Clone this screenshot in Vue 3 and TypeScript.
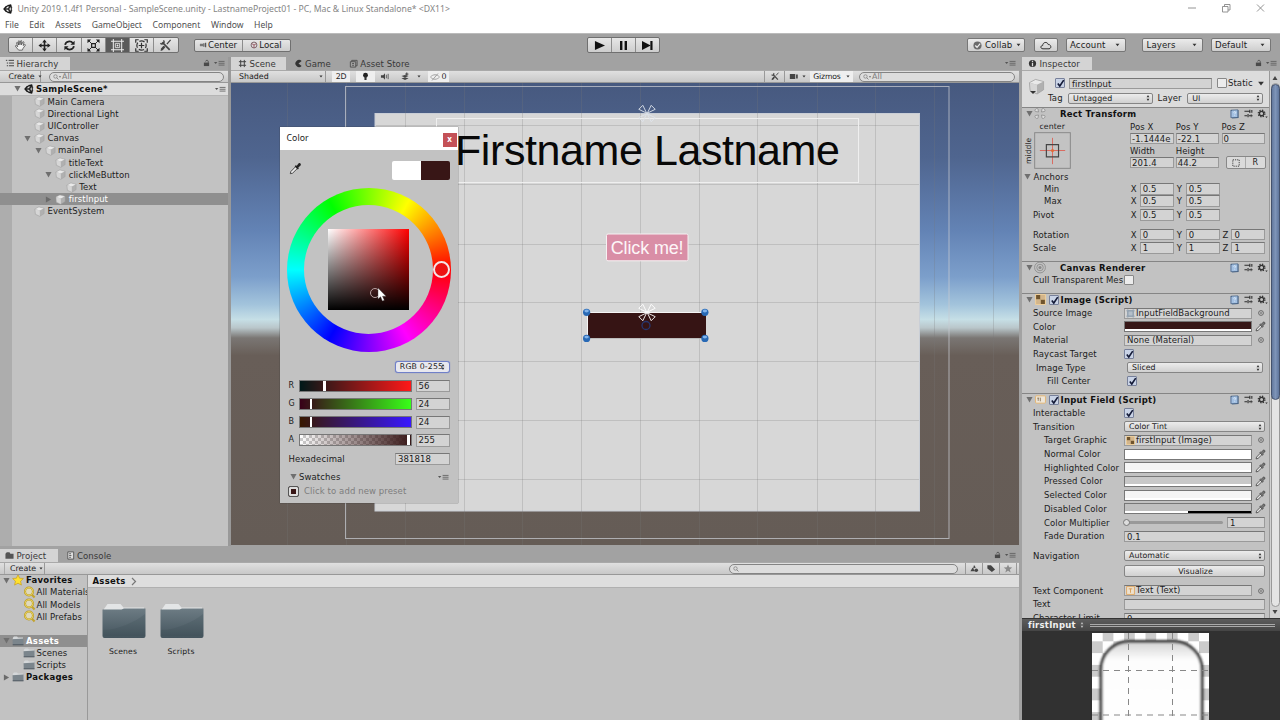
<script setup lang="ts">
interface TreeNode { label: string; depth: number; arrow?: 'open' | 'closed'; selected?: boolean }
interface Field { kind: string; label: string; indent?: number; value?: string; icon?: string; gap?: number; color?: string; alpha?: string; checked?: boolean }

const menus = ['File', 'Edit', 'Assets', 'GameObject', 'Component', 'Window', 'Help']
const tools = ['hand', 'move', 'rotate', 'scale', 'rect', 'multi', 'wrench']
const hierarchy: TreeNode[] = [
  { label: 'Main Camera', depth: 0 },
  { label: 'Directional Light', depth: 0 },
  { label: 'UIController', depth: 0 },
  { label: 'Canvas', depth: 0, arrow: 'open' },
  { label: 'mainPanel', depth: 1, arrow: 'open' },
  { label: 'titleText', depth: 2 },
  { label: 'clickMeButton', depth: 2, arrow: 'open' },
  { label: 'Text', depth: 3 },
  { label: 'firstInput', depth: 2, arrow: 'closed', selected: true },
  { label: 'EventSystem', depth: 0 },
]
const vectors = [
  { label: 'Min', cls: 'min', axes: [['X', '0.5'], ['Y', '0.5']] },
  { label: 'Max', cls: 'max', axes: [['X', '0.5'], ['Y', '0.5']] },
  { label: 'Pivot', cls: 'pivot', axes: [['X', '0.5'], ['Y', '0.5']] },
  { label: 'Rotation', cls: 'rotation', axes: [['X', '0'], ['Y', '0'], ['Z', '0']] },
  { label: 'Scale', cls: 'scale', axes: [['X', '1'], ['Y', '1'], ['Z', '1']] },
]
const imageFields: Field[] = [
  { kind: 'object', label: 'Source Image', value: 'InputFieldBackground', icon: 'sprite' },
  { kind: 'color', label: 'Color', color: '#381818', alpha: '#ffffff' },
  { kind: 'object', label: 'Material', value: 'None (Material)' },
  { kind: 'check', label: 'Raycast Target' },
  { kind: 'select', label: 'Image Type', value: 'Sliced', indent: 3 },
  { kind: 'check', label: 'Fill Center', indent: 14 },
]
const inputFields: Field[] = [
  { kind: 'check', label: 'Interactable' },
  { kind: 'select', label: 'Transition', value: 'Color Tint' },
  { kind: 'object', label: 'Target Graphic', value: 'firstInput (Image)', icon: 'image', indent: 11 },
  { kind: 'color', label: 'Normal Color', indent: 11, color: '#ffffff', alpha: '#ffffff' },
  { kind: 'color', label: 'Highlighted Color', indent: 11, color: '#f5f5f5', alpha: '#ffffff' },
  { kind: 'color', label: 'Pressed Color', indent: 11, color: '#c8c8c8', alpha: '#ffffff' },
  { kind: 'color', label: 'Selected Color', indent: 11, color: '#f5f5f5', alpha: '#ffffff' },
  { kind: 'color', label: 'Disabled Color', indent: 11, color: '#c0c0c0', alpha: 'linear-gradient(90deg,#fff 50%,#000 50%)' },
  { kind: 'slider', label: 'Color Multiplier', indent: 11, value: '1' },
  { kind: 'text', label: 'Fade Duration', indent: 11, value: '0.1' },
  { kind: 'select', label: 'Navigation', value: 'Automatic', gap: 5.8 },
  { kind: 'button', label: '', value: 'Visualize', gap: 2 },
  { kind: 'object', label: 'Text Component', value: 'Text (Text)', icon: 'text', gap: 5.6 },
  { kind: 'text', label: 'Text', value: '' },
  { kind: 'text', label: 'Character Limit', value: '0' },
]
const channels = [
  { name: 'R', value: '56', pos: 22, bg: 'linear-gradient(90deg,#001818,#ff1818)' },
  { name: 'G', value: '24', pos: 9.8, bg: 'linear-gradient(90deg,#380018,#381818 10%,#38ff18)' },
  { name: 'B', value: '24', pos: 9.8, bg: 'linear-gradient(90deg,#381800,#381818 10%,#3818ff)' },
  { name: 'A', value: '255', pos: 98, bg: 'linear-gradient(90deg,#38181800,#381818),repeating-conic-gradient(#ccc 0 25%,#fff 0 50%) 0 0/6px 6px' },
]
const gridX = [287.5, 346.5, 405.5, 464.5, 522.5, 581.5, 640.5, 699.5, 757.5, 817.5, 875.5, 934.5, 993.5]
const gridY = [125.5, 184.5, 244.5, 302.5, 361.5, 420.5, 479.5]
const handles = [[586.6, 312.3], [704.9, 312.3], [586.6, 338.4], [704.9, 338.4]]
const previewTiles: { x: number; y: number }[] = []
for (let r = 0; r < 9; r++) for (let c = 0; c < 11; c++) if ((r + c) % 2 === 1) previewTiles.push({ x: c * 10.7, y: r * 11.8 - 3.5 })
</script>

<template>
  <div class="editor">
    <svg class="defs" width="0" height="0">
      <defs>
        <symbol id="unity" viewBox="0 0 12 12"><path d="M9.900 4.800 9 1.400 5.500 2.300 5 3.100H3.900L1.400 6l2.500 2.900H5l.5.8 3.500.9.9-3.400-.5-1.200zM5.300 3.500 7.500 3 6.100 5.400H3.300zM3.300 6.600h2.800L7.500 9l-2.200-.5zM8.500 8.400 7.100 6 8.500 3.600 9.100 6z" fill="#161616" stroke="#161616" stroke-width=".4" fill-rule="evenodd" /></symbol>
        <symbol id="cube" viewBox="0 0 12 12"><path d="M1 3.300 5.300 1 11 2.500v5.800L6.400 11.300 1.500 9z" fill="#b0b0b0" /><path d="M1 3.300 5.300 1 11 2.500 6.300 4.800z" fill="#e9e9e9" /><path d="M1 3.300l5.300 1.500.1 6.500L1.500 9z" fill="#d6d6d6" /><path d="M1 3.300 5.300 1 11 2.500v5.800L6.400 11.300 1.500 9z" fill="none" stroke="#9d9d9d" stroke-width=".5" /></symbol>
        <symbol id="down" viewBox="0 0 8 8"><path d="M.5 1h7L4 7.300z" fill="#6f6f6f" /></symbol>
        <symbol id="right" viewBox="0 0 8 8"><path d="M1 .5v7l6-3.500z" fill="#6a6a6a" /></symbol>
        <symbol id="caret" viewBox="0 0 6 4"><path d="M.7.5h4.600L3 3.500z" fill="#333" /></symbol>
        <symbol id="menu" viewBox="0 0 12 7"><path d="M0 2.200h3.600L1.800 4.400z" fill="#555" /><path d="M5 1.500h6.500M5 3.500h6.500M5 5.500h6.500" stroke="#5c5c5c" stroke-width=".9" /></symbol>
        <symbol id="lock" viewBox="0 0 8 8"><path d="M1 3.500h6v4H1z" fill="#4a4a4a" /><path d="M3 2.300C3 .5 6 .3 6 2.500v1.200" fill="none" stroke="#4a4a4a" /></symbol>
        <symbol id="search" viewBox="0 0 8 8"><circle cx="3.300" cy="3.300" r="2.300" fill="none" stroke="#777" stroke-width=".9" /><path d="m5 5 2.300 2.300" stroke="#777" stroke-width="1.100" /></symbol>
        <symbol id="updown" viewBox="0 0 4 8"><path d="M.6 3.300 2 1l1.400 2.300zM.6 4.700 2 7l1.400-2.300z" fill="#333" /></symbol>
        <symbol id="pick" viewBox="0 0 12 12"><path d="m1.200 10.800.5-2L6 4.400 7.700 6l-4.400 4.300z" fill="#eee" stroke="#333" stroke-width=".8" /><path d="m5.200 4 1-1 .9.500L8.800 1.300c1-1 2.900.6 1.900 1.900L8.600 5l.5 1-1 .9z" fill="#222" /></symbol>
        <symbol id="pickgray" viewBox="0 0 12 12"><path d="m1.200 10.800.5-2L6 4.400 7.700 6l-4.400 4.300z" fill="#e4e4e4" stroke="#444" stroke-width=".9" /><path d="m5.200 4 1-1 .9.500L8.800 1.300c1-1 2.900.6 1.900 1.900L8.600 5l.5 1-1 .9z" fill="#777" stroke="#333" stroke-width=".6" /></symbol>
        <symbol id="target" viewBox="0 0 8 8"><circle cx="4" cy="4" r="2.400" fill="none" stroke="#555" stroke-width=".8" /><circle cx="4" cy="4" r=".8" fill="#555" /></symbol>
        <symbol id="book" viewBox="0 0 11 11"><path d="M1 1.500 2 .8 9.200.6l.9 1V10l-7 .4-2.100-1z" fill="#4c6687" /><path d="M1.200 1.800 2.500 2.200V9.400l-1.300-.6z" fill="#8fa9c9" /><path d="M2.700 1.600 8.700 1.300v7.500l-6 .4z" fill="#a3c0e2" /><path d="M4.600 4c0-1.500 2.400-1.300 2.200 0-.1.800-1.100.8-1.100 1.600m0 .8v.9" fill="none" stroke="#e8f1fb" stroke-width=".9" /></symbol>
        <symbol id="presets" viewBox="0 0 10 10"><path d="M.5 2.500H6M.5 7.500h3M5.500 7.500h4M6.500.8v3.600M4.500 5.600v3.700M8.700 1v3.200" stroke="#2d2d2d" stroke-width="1.200" /><path d="M8 5.600v3.600" stroke="#2d2d2d" stroke-width=".6" /></symbol>
        <symbol id="gear" viewBox="0 0 12 11"><circle cx="5" cy="5" r="2.400" fill="none" stroke="#333" stroke-width="1.500" /><circle cx="5" cy="5" r="3.700" fill="none" stroke="#333" stroke-width="1.300" stroke-dasharray="1.500 1.400" /><path d="M9 8.300h2.800L10.400 10z" fill="#333" /></symbol>
        <symbol id="check" viewBox="0 0 10 10"><path d="m2 5 2.200 2.800L8.600 1.200" fill="none" stroke="#151b38" stroke-width="1.800" /></symbol>
        <symbol id="sprite" viewBox="0 0 10 10"><rect x="2" y="2" width="6" height="6" fill="#b4bfca" stroke="#8495a5" /><path d="M0 2h10M0 8h10M2 0v10M8 0v10" stroke="#91a0af" stroke-width=".7" /></symbol>
        <symbol id="image" viewBox="0 0 10 10"><rect width="10" height="10" rx="1" fill="#eccd9a" /><path d="M1 1h4v4H1zM5 5h4v4H5z" fill="#6f542e" /><path d="M5 1h4v4H5zM1 5h4v4H1z" fill="#d3b58b" /></symbol>
        <symbol id="text" viewBox="0 0 10 10"><rect x=".7" y=".7" width="8.600" height="8.600" fill="#eee2cf" stroke="#e1a75f" /><path d="M3 3.200h4M5 3v4.500" stroke="#d99b50" /></symbol>
        <symbol id="field" viewBox="0 0 12 10"><rect x=".6" y="1" width="10.800" height="8" rx="1" fill="#eee6d9" stroke="#e5b46d" /><path d="M2.500 3.500h2M3.500 3.500v3M5.800 3v4" stroke="#765f3e" stroke-width=".8" /></symbol>
        <symbol id="rays" viewBox="0 0 12 12"><circle cx="6" cy="6" r="5" fill="none" stroke="#8b8b8b" stroke-width=".8" /><circle cx="6" cy="6" r="3" fill="none" stroke="#8b8b8b" stroke-width=".8" /><circle cx="6" cy="6" r="1.400" fill="#888" /></symbol>
        <symbol id="anchors" viewBox="0 0 18 18"><path d="M8.700 8.700.8 4.800 4.800.8zM9.300 8.700 13.200.8l4 4zM8.700 9.300.8 13.200l4 4zM9.300 9.300l7.900 3.900-4 4z" fill="none" stroke="currentColor" stroke-width=".9" /></symbol>
        <symbol id="petals" viewBox="0 0 14 14"><path d="M5.400 5.400 2 4.800C.5 3.400 3.400.5 4.800 2zM8.600 5.400l.6-3.400c1.400-1.500 4.300 1.400 2.800 2.800zM5.400 8.600 2 9.200c-1.500 1.400 1.400 4.300 2.800 2.800zM8.600 8.600l3.400.6c1.500 1.400-1.400 4.300-2.800 2.800z" fill="#ddd" stroke="#888" stroke-width=".8" /></symbol>
        <symbol id="hand" viewBox="0 0 14 14"><path d="M5 12 1.600 8c-.4-1 .7-1.300 1.500-.5L4 8.300 2.800 4.500c-.2-1 .9-1.200 1.200-.3L5 6.500 4.700 2.600c0-1 1.200-1 1.300 0l.4 3.600.7-4c.2-.9 1.300-.7 1.200.3L8 6.300l1.600-3c.5-.8 1.400-.3 1.100.6L9.900 7l1.500-1c.8-.3 1.200.4.600 1L9.800 10 9 12z" fill="#f2f2f2" stroke="#444" stroke-width=".8" /></symbol>
        <symbol id="move" viewBox="0 0 14 14"><path d="M7 2v10M2 7h10" stroke="#222" stroke-width="1.700" /><path d="M7 .5 9.500 3.800h-5zM7 13.500l2.500-3.300h-5zM.5 7l3.300-2.500v5zM13.500 7l-3.300-2.500v5z" fill="#222" /></symbol>
        <symbol id="rotate" viewBox="0 0 14 14"><path d="M2.300 6.300C3 2.500 8 1.400 10.700 4.500M11.700 7.700C11 11.500 6 12.600 3.300 9.500" fill="none" stroke="#222" stroke-width="1.900" /><path d="M12.500 2v4.300H8zM1.500 12V7.700H6z" fill="#222" /></symbol>
        <symbol id="scale" viewBox="0 0 14 14"><path d="M5 5h4v4H5z" fill="#ddd" stroke="#222" stroke-width="1.300" /><path d="m1 1 4 4M13 1 9 5M1 13l4-4M13 13 9 9" stroke="#222" /><path d="M.5.500h4l-4 4zM13.500.5h-4l4 4zM.5 13.500h4l-4-4zM13.500 13.500h-4l4-4z" fill="#222" /></symbol>
        <symbol id="rect" viewBox="0 0 14 14"><path d="M2.500 0v14M11.500 0v14M0 2.500h14M0 11.500h14" fill="none" stroke="#ededed" stroke-width="1.100" /><path d="M4.700 4.700h4.600v4.600H4.700z" fill="none" stroke="#ddd" /><circle cx="7" cy="7" r="1" fill="#eee" /></symbol>
        <symbol id="multi" viewBox="0 0 14 14"><circle cx="7" cy="7" r="5" fill="none" stroke="#333" stroke-width="1.300" stroke-dasharray="5.850 2" stroke-dashoffset="3" /><path d="M7 4v6M4 7h6M.8 4V.8H4M10 .8h3.200V4M.8 10v3.200H4M10 13.200h3.200V10" fill="none" stroke="#333" stroke-width="1.300" /></symbol>
        <symbol id="wrench" viewBox="0 0 14 14"><path d="m3.500 3.500 8 8.300" stroke="#444" stroke-width="1.900" /><path d="M4.800 1.500A2.300 2.300 0 0 1 1.500 4.700" fill="none" stroke="#444" stroke-width="1.500" /><path d="m12.500 1-4 4.500M5.800 8 2 12.500" stroke="#444" stroke-width="1.400" /><path d="m5.800 8-3 3.600" stroke="#444" stroke-width="2.600" /></symbol>
        <symbol id="folder" viewBox="0 0 12 10"><path d="M1 1.500 2 .5h3l1 1h5v2H.6z" fill="#d4d7d9" /><path d="M.5 3.200 11.500 2.500v6.300H.8z" fill="#7b858c" /><path d="M.7 8.800h10.800" stroke="#4b555d" /></symbol>
        <symbol id="find" viewBox="0 0 13 13"><circle cx="6" cy="5.500" r="4" fill="#dfd9bd" stroke="#b89b29" stroke-width="2.100" /><circle cx="6" cy="5.500" r="4" fill="none" stroke="#e9d25c" stroke-width="1" /><path d="m9 8.800 2.600 2.700" stroke="#c3a431" stroke-width="2.200" /></symbol>
      </defs>
    </svg>

    <header class="titlebar">
      <svg class="logo"><use href="#unity" /></svg>
      <span class="title">Unity 2019.1.4f1 Personal - SampleScene.unity - LastnameProject01 - PC, Mac &amp; Linux Standalone* &lt;DX11&gt;</span>
      <svg class="winbtns" viewBox="0 0 90 16"><path d="M8 8h8M42.500 6.500h5.500v5.500h-5.500zM44.500 6.500v-2H50V10h-2M77 4.500l7 7M84 4.500l-7 7" fill="none" stroke="#888" stroke-width=".9" /></svg>
    </header>
    <nav class="menubar"><span v-for="m in menus" :key="m">{{ m }}</span></nav>

    <div class="toolbar">
      <div class="group tools">
        <span v-for="t in tools" :key="t" :class="{ on: t === 'rect' }"><svg><use :href="'#' + t" /></svg></span>
      </div>
      <div class="group pivots">
        <span><svg viewBox="0 0 9 8"><path d="M1 2.500h3.500v3H1z" fill="#777" /><path d="M7.500 1.500v5M5.500 2v4" stroke="#444" stroke-width="1.200" /></svg>Center</span>
        <span><svg viewBox="0 0 9 8"><circle cx="4.500" cy="4" r="3.300" fill="#ddd" stroke="#745a60" /><path d="M2 2.500 4.500 4 7 2.500M4.500 4v3.500" fill="none" stroke="#95505c" /></svg>Local</span>
      </div>
      <div class="group play">
        <span><svg viewBox="0 0 14 12"><path d="m2 1 11 5-11 5z" fill="#111" /></svg></span>
        <span><svg viewBox="0 0 14 12"><path d="M4.500 1v10M9.500 1v10" stroke="#111" stroke-width="2.600" /></svg></span>
        <span><svg viewBox="0 0 14 12"><path d="m1 1 9.500 5L1 11z" fill="#111" /><path d="M11.300 1v10" stroke="#111" stroke-width="2.400" /></svg></span>
      </div>
      <div class="drop collab"><svg class="tick" viewBox="0 0 10 10"><circle cx="5" cy="5" r="4.500" fill="#6c6c6c" /><path d="m2.500 5 2 2L8 3" fill="none" stroke="#eee" stroke-width="1.400" /></svg>Collab<svg class="caret"><use href="#caret" /></svg></div>
      <div class="drop cloud"><svg viewBox="0 0 12 9"><path d="M3 7.800C.2 7.800.2 4.500 2.700 4.500 2.700 1 7.300.3 8.200 3.500c3-.3 3.700 4.100.8 4.300z" fill="none" stroke="#333" /></svg></div>
      <div class="drop account">Account<svg class="caret"><use href="#caret" /></svg></div>
      <div class="drop layers">Layers<svg class="caret"><use href="#caret" /></svg></div>
      <div class="drop">Default<svg class="caret"><use href="#caret" /></svg></div>
    </div>

    <main class="workspace">
      <div class="left">
        <div class="upper">
          <section class="hierarchy">
            <div class="tabs">
              <span class="tab active htab"><svg class="ico" viewBox="0 0 10 10"><path d="M1 1.500h1.500M4 1.500h6M2 4.500h1.500M4.500 4.500H10M2 7.500h1.500M4.500 7.500H10" stroke="#444" stroke-width="1.100" /></svg>Hierarchy</span>
              <span class="tabtools"><svg class="lock"><use href="#lock" /></svg><svg class="mn"><use href="#menu" /></svg></span>
            </div>
            <div class="strip">
              <span class="create">Create<svg class="caret"><use href="#caret" /></svg></span>
              <span class="search hs"><svg><use href="#search" /></svg><i></i>All</span>
            </div>
            <div class="tree">
              <div class="scenerow"><svg class="arr"><use href="#down" /></svg><svg class="u"><use href="#unity" /></svg><b>SampleScene*</b><svg class="mn"><use href="#menu" /></svg></div>
              <div v-for="n in hierarchy" :key="n.label" class="node" :class="{ sel: n.selected }" :style="{ paddingLeft: 24 + n.depth * 10.6 + 'px' }">
                <svg class="arr"><use v-if="n.arrow" :href="n.arrow === 'open' ? '#down' : '#right'" /></svg>
                <svg class="cube"><use href="#cube" /></svg><span>{{ n.label }}</span>
              </div>
            </div>
          </section>

          <section class="scene">
            <div class="tabs">
              <span class="tab active stab"><svg class="ico" viewBox="0 0 10 10"><path d="M3 1v8M7 1v8M1 3h8M1 7h8" stroke="#444" stroke-width="1.100" /></svg>Scene</span>
              <span class="tab gtab"><svg class="ico" viewBox="0 0 10 10"><path d="M8.500 2.200A4 4 0 1 0 8.500 7.800L5 5z" fill="#333" /></svg>Game</span>
              <span class="tab"><svg class="ico" viewBox="0 0 10 10"><path d="M1.500 3h6v6h-6zM3 3V1.500h6v6H7.500M3.500 5h2M3.500 7h2" fill="none" stroke="#555" stroke-width="1.100" /></svg>Asset Store</span>
              <span class="tabtools"><svg class="mn"><use href="#menu" /></svg></span>
            </div>
            <div class="strip sstrip">
              <span class="shaded">Shaded<svg class="caret"><use href="#caret" /></svg></span>
              <span class="lit two">2D</span>
              <span class="lit bulb"><svg viewBox="0 0 8 10"><circle cx="4" cy="3.500" r="2.800" fill="#222" /><path d="M2.800 5h2.400v4H2.800z" fill="#333" /></svg></span>
              <span class="cell w21"><svg viewBox="0 0 10 10"><path d="M.5 3.500H3L5 1.500v7L3 6.500H.5z" fill="#444" /><path d="M6.500 3v4M8.500 2v6" stroke="#555" /></svg></span>
              <span class="cell w21"><svg viewBox="0 0 10 10"><path d="m1 4.500 4-1.300 4 1.300L5 6zM1 7l4-1 4 1-4 2z" fill="#444" /><path d="M7 .5v3.600M5.200 2.300h3.600" stroke="#333" /></svg></span>
              <span class="cell w8"><svg class="caret"><use href="#caret" /></svg></span>
              <span class="lit eye"><svg viewBox="0 0 10 8"><path d="M.5 4C3 1 7 1 9.500 4 7 7 3 7 .5 4zM2 7.500 8 .5" fill="none" stroke="#999" stroke-width=".9" /></svg>0</span>
              <span class="grow"></span>
              <span class="cell w21 bl"><svg><use href="#wrench" /></svg></span>
              <span class="cell w26 bl"><svg viewBox="0 0 12 10"><path d="M1 2h6.500v6H1zM8.500 2.500h2v5h-2z" fill="#444" /></svg><svg class="caret"><use href="#caret" /></svg></span>
              <span class="lit giz">Gizmos<svg class="caret"><use href="#caret" /></svg></span>
              <span class="search ss"><svg><use href="#search" /></svg><i></i>All</span>
            </div>
            <svg class="viewport" viewBox="231 83 788 462">
              <defs>
                <linearGradient id="sky" x1="0" y1="0" x2="0" y2="1">
                  <stop offset="0" stop-color="#47597f" /><stop offset=".16" stop-color="#4f658f" /><stop offset=".32" stop-color="#6383b5" /><stop offset=".42" stop-color="#7c9fcb" /><stop offset=".48" stop-color="#a3c4dc" /><stop offset=".512" stop-color="#c6dfe6" /><stop offset=".53" stop-color="#b9c6ca" /><stop offset=".552" stop-color="#7a7673" /><stop offset=".59" stop-color="#685e58" /><stop offset="1" stop-color="#655c56" />
                </linearGradient>
              </defs>
              <rect x="231" y="83" width="788" height="462" fill="url(#sky)" />
              <rect x="375" y="113.500" width="544.500" height="397.500" fill="#d7d7d7" stroke="#c9ced6" />
              <g stroke="#777" stroke-opacity=".25"><path v-for="x in gridX" :key="x" :d="`M${x} 83v462`" /><path v-for="y in gridY" :key="y" :d="`M376 ${y}h543`" /></g>
              <rect x="345.500" y="86.500" width="603.500" height="452" fill="none" stroke="#c7cad0" stroke-opacity=".75" />
              <rect x="436.500" y="118.500" width="422" height="64" fill="none" stroke="#efefef" />
              <text x="455" y="165.300" class="big" textLength="385">Firstname Lastname</text>
              <rect x="606.500" y="234" width="81.500" height="26.800" rx="1.500" fill="#d98ea6" stroke="#f7f0f2" />
              <text x="610.700" y="254" class="click" textLength="73">Click me!</text>
              <rect x="588" y="313" width="118" height="25" fill="#361414" />
              <path d="M587.500 338V312.500H705" fill="none" stroke="#f5f5f5" />
              <path d="M589 338.500h116" stroke="#aaa" stroke-opacity=".6" />
              <circle cx="646" cy="325.500" r="4" fill="none" stroke="#26356e" stroke-width="1.300" />
              <use href="#anchors" x="638" y="104.500" width="18" height="18" color="#dfe4ec" />
              <use href="#anchors" x="638" y="303.500" width="18" height="18" color="#fff" />
              <g v-for="(p, i) in handles" :key="i"><circle :cx="p[0]" :cy="p[1]" r="3.600" fill="#2869b5" /><ellipse :cx="p[0]" :cy="p[1] - 1.300" rx="2.200" ry="1.400" fill="#80b2ea" /></g>
            </svg>
          </section>
        </div>

        <section class="project">
          <div class="tabs">
            <span class="tab active ptab"><svg class="ico" viewBox="0 0 10 10"><path d="M.5 3 2 1.500h3L6 3h3.500v5.500h-9z" fill="#555" /></svg>Project</span>
            <span class="tab ctab"><svg class="ico" viewBox="0 0 10 10"><path d="M2 1h6.500v8H2zM3.500 3h2M3.500 5H6M3.500 7h2" fill="#ddd" stroke="#555" /></svg>Console</span>
            <span class="tabtools"><svg class="lock"><use href="#lock" /></svg><svg class="mn"><use href="#menu" /></svg></span>
          </div>
          <div class="strip">
            <span class="create pc">Create<svg class="caret"><use href="#caret" /></svg></span>
            <span class="grow"></span>
            <span class="search ps"><svg><use href="#search" /></svg></span>
            <span class="cell w17 bl m8"><svg viewBox="0 0 10 10"><path d="M5 1 7 4 4 5zM1 8l2.500-4L6 8z" fill="#444" /><circle cx="7.500" cy="7" r="2" fill="#444" /></svg></span>
            <span class="cell w17 bl"><svg viewBox="0 0 10 10"><path d="M1 1.500h4l4.500 4.500L6 9 1 5z" fill="#444" /></svg></span>
            <span class="cell w17 bl"><svg viewBox="0 0 10 10"><path d="m5 .5 1.300 3.200 3.400.2L7 6l1 3.400-3-2-3 2L3 6 .3 3.900l3.400-.2z" fill="#8a8a8a" /></svg></span>
            <span class="cell tail bl"></span>
          </div>
          <div class="pbody">
            <div class="ptree">
              <div class="prow first"><svg class="arr"><use href="#down" /></svg><svg class="star" viewBox="0 0 12 12"><path d="m6 .7 1.600 3.500 3.800.3-2.800 2.700.8 3.900L6 9.200l-3.400 1.900.8-3.900L.6 4.500l3.800-.3z" fill="#ffe12e" stroke="#c89d1c" stroke-width=".7" /></svg><b>Favorites</b></div>
              <div v-for="q in ['All Materials', 'All Models', 'All Prefabs']" :key="q" class="prow sub"><svg class="find"><use href="#find" /></svg>{{ q }}</div>
              <div class="prow"></div>
              <div class="prow sel"><svg class="arr"><use href="#down" /></svg><svg class="fold"><use href="#folder" /></svg><b>Assets</b></div>
              <div v-for="q in ['Scenes', 'Scripts']" :key="q" class="prow sub"><svg class="fold"><use href="#folder" /></svg>{{ q }}</div>
              <div class="prow"><svg class="arr"><use href="#right" /></svg><svg class="fold"><use href="#folder" /></svg><b>Packages</b></div>
            </div>
            <div class="pmain">
              <div class="crumbs"><b>Assets</b><svg viewBox="0 0 6 9"><path d="m1 1 3.500 3.500L1 8" fill="none" stroke="#777" stroke-width="1.200" /></svg></div>
              <div class="assets">
                <figure v-for="q in ['Scenes', 'Scripts']" :key="q">
                  <svg viewBox="0 0 46 38">
                    <defs><linearGradient :id="'f' + q" x1="0" y1="0" x2="0" y2="1"><stop offset="0" stop-color="#6d7c84" /><stop offset="1" stop-color="#44545d" /></linearGradient></defs>
                    <path d="M3 7 6.500 2h13l3 3.500H43v6H3z" fill="#e3e5e6" />
                    <path d="M1.500 7.500h19L23 6.500h21.500V34q0 2-2 2h-39q-2 0-2-2z" :fill="`url(#f${q})`" />
                    <path d="M2 28C17 28 34 20 44 12V34H2z" fill="#2f424b" opacity=".16" />
                  </svg>
                  <figcaption>{{ q }}</figcaption>
                </figure>
              </div>
            </div>
          </div>
        </section>
      </div>

      <aside class="inspector">
        <div class="tabs">
          <span class="tab active itab"><svg class="ico" viewBox="0 0 10 10"><circle cx="5" cy="5" r="4" fill="#333" /><path d="M5 2v1.300M5 4.300V8" stroke="#ddd" stroke-width="1.400" /></svg>Inspector</span>
          <span class="tabtools"><svg class="lock"><use href="#lock" /></svg><svg class="mn"><use href="#menu" /></svg></span>
        </div>
        <div class="ibody">
          <div class="icontent">
            <div class="objhead">
              <svg class="bigcube" viewBox="0 0 18 18"><use href="#cube" width="17" height="17" /><path d="M2 13h6l-3 3z" fill="#333" /></svg>
              <div class="objlines">
                <div class="line"><span class="cb"><svg><use href="#check" /></svg></span><span class="box name">firstInput</span><span class="cb empty"></span><span class="static">Static</span><svg class="sc"><use href="#caret" /></svg></div>
                <div class="line tag"><span>Tag</span><span class="sel1">Untagged<svg><use href="#updown" /></svg></span><span>Layer</span><span class="sel1 s2">UI<svg><use href="#updown" /></svg></span></div>
              </div>
            </div>

            <div class="comp rt">
              <div class="chead"><svg class="arr"><use href="#down" /></svg><svg class="cic"><use href="#petals" /></svg><b class="solo">Rect Transform</b><svg class="bk"><use href="#book" /></svg><svg class="pr"><use href="#presets" /></svg><svg class="ge"><use href="#gear" /></svg></div>
              <div class="rectgrid">
                <div class="preset">
                  <span class="ctr">center</span><span class="mid">middle</span>
                  <svg viewBox="0 0 38 38"><rect x=".7" y=".7" width="36.600" height="36.600" fill="#c3c3c3" stroke="#888" /><path d="M6 19h26M19 6v27" stroke="#d9695f" /><path d="M12.700 13h12.500v12.500H12.700z" fill="none" stroke="#444" stroke-width="1.200" /><circle cx="19" cy="19" r="1.600" fill="#df6a35" /></svg>
                </div>
                <div class="posgrid">
                  <span>Pos X</span><span>Pos Y</span><span>Pos Z</span>
                  <span class="box">-1.1444e</span><span class="box">-22.1</span><span class="box">0</span>
                  <span>Width</span><span>Height</span><span></span>
                  <span class="box">201.4</span><span class="box">44.2</span>
                  <span class="rbtn"><i><svg viewBox="0 0 10 10"><path d="M1 1h8v8H1z" fill="none" stroke="#333" stroke-width="1.100" stroke-dasharray="1.500 1.200" /></svg></i><i>R</i></span>
                </div>
              </div>
              <div class="anch"><svg class="arr"><use href="#down" /></svg>Anchors</div>
              <div v-for="v in vectors" :key="v.label" class="vec" :class="v.cls">
                <span class="vl">{{ v.label }}</span>
                <template v-for="a in v.axes" :key="a[0]"><span class="ax">{{ a[0] }}</span><span class="box vb">{{ a[1] }}</span></template>
              </div>
            </div>

            <div class="comp cr">
              <div class="chead"><svg class="arr"><use href="#down" /></svg><svg class="cic"><use href="#rays" /></svg><b class="solo">Canvas Renderer</b><svg class="bk"><use href="#book" /></svg><svg class="pr"><use href="#presets" /></svg><svg class="ge"><use href="#gear" /></svg></div>
              <div class="row"><span class="lab">Cull Transparent Mes</span><span class="cb empty"></span></div>
            </div>

            <div v-for="(c, ci) in [{ t: 'Image (Script)', i: 'image', f: imageFields }, { t: 'Input Field (Script)', i: 'field', f: inputFields }]" :key="ci" class="comp" :class="ci ? 'inp' : 'img'">
              <div class="chead"><svg class="arr"><use href="#down" /></svg><svg class="cic s"><use :href="'#' + c.i" /></svg><span class="cb"><svg><use href="#check" /></svg></span><b>{{ c.t }}</b><svg class="bk"><use href="#book" /></svg><svg class="pr"><use href="#presets" /></svg><svg class="ge"><use href="#gear" /></svg></div>
              <div v-for="(f, fi) in c.f" :key="fi" class="row" :style="{ marginTop: (f.gap || 0) + 'px' }">
                <span class="lab" :style="{ paddingLeft: (f.indent || 0) + 'px' }">{{ f.label }}</span>
                <template v-if="f.kind === 'object'"><span class="box obj"><svg v-if="f.icon"><use :href="'#' + f.icon" /></svg><em>{{ f.value }}</em></span><svg class="tg"><use href="#target" /></svg></template>
                <template v-else-if="f.kind === 'color'"><span class="col"><i :style="{ background: f.color }"></i><u :style="{ background: f.alpha }"></u></span><svg class="pk"><use href="#pickgray" /></svg></template>
                <span v-else-if="f.kind === 'check'" class="cb" :class="{ shift: f.indent }"><svg><use href="#check" /></svg></span>
                <span v-else-if="f.kind === 'select'" class="popup" :class="{ shift: f.indent }">{{ f.value }}<svg><use href="#updown" /></svg></span>
                <span v-else-if="f.kind === 'button'" class="popup vis">{{ f.value }}</span>
                <template v-else-if="f.kind === 'slider'"><span class="slide"><i></i></span><span class="box sv">{{ f.value }}</span></template>
                <span v-else class="box full">{{ f.value }}</span>
              </div>
            </div>
          </div>
          <div class="scroll"><svg class="su" viewBox="0 0 8 6"><path d="M4 1 6.500 5h-5z" fill="#444" /></svg><div class="track"><div class="thumb"></div></div><svg class="su" viewBox="0 0 8 6"><path d="M4 5 6.500 1h-5z" fill="#444" /></svg></div>
        </div>
        <div class="phead"><b>firstInput</b><svg class="pud" viewBox="0 0 4 8"><path d="M.6 3.300 2 1l1.400 2.300zM.6 4.700 2 7l1.400-2.300z" fill="#bbb" /></svg><i></i></div>
        <div class="preview">
          <svg viewBox="0 0 117 87">
            <defs>
              <filter id="soft"><feGaussianBlur stdDeviation="1" /></filter>
              <linearGradient id="fade" x1="0" y1="0" x2="0" y2="1"><stop offset="0" stop-color="#d2d2d2" /><stop offset=".17" stop-color="#fdfdfd" /><stop offset="1" stop-color="#fff" /></linearGradient>
            </defs>
            <rect width="117" height="87" fill="#fff" />
            <rect v-for="(t, i) in previewTiles" :key="i" :x="t.x" :y="t.y" width="10.700" height="11.800" fill="#cbcbcb" />
            <rect x="9" y="8.500" width="101" height="110" rx="28" fill="url(#fade)" stroke="#333" stroke-width="3" filter="url(#soft)" />
            <path d="M36.500 0v87M80.500 0v87M0 37.500h117M0 82h117" stroke="#888" stroke-dasharray="6 5" />
          </svg>
        </div>
      </aside>
    </main>

    <div class="dialog">
      <div class="dtitle"><span>Color</span><i>x</i></div>
      <div class="dbody">
        <div class="dtop"><svg><use href="#pick" /></svg><span class="sw"><i></i><i class="dk"></i></span></div>
        <div class="wheel"><div class="hole"><div class="sv2"></div></div><i class="hue"></i><i class="pt"></i>
          <svg class="cursor" viewBox="0 0 10 15"><path d="M1 1v11l2.600-2.300L5.400 14l1.900-.8-1.800-4H9z" fill="#fff" stroke="#444" stroke-width=".4" /></svg>
        </div>
        <div class="mode"><span>RGB 0-255<svg><use href="#updown" /></svg></span></div>
        <div v-for="c in channels" :key="c.name" class="chan"><span>{{ c.name }}</span><div class="bar" :style="{ background: c.bg }"><i :style="{ left: c.pos + '%' }"></i></div><span class="box">{{ c.value }}</span></div>
        <div class="hex"><span>Hexadecimal</span><span class="box">381818</span></div>
        <div class="swh"><svg class="arr"><use href="#down" /></svg>Swatches<svg class="mn"><use href="#menu" /></svg></div>
        <div class="add"><i></i>Click to add new preset</div>
      </div>
    </div>
  </div>
</template>

<style>
html, body { margin: 0; overflow: hidden; }
</style>

<style scoped>
* { box-sizing: border-box; }
i, u, em { font-style: normal; text-decoration: none; }
svg { display: block; flex: none; overflow: visible; }
.defs { position: absolute; }
.editor { position: relative; width: 1280px; height: 720px; overflow: hidden; display: flex; flex-direction: column; background: #a2a2a2; color: #1c1c1c; font: 8.5px/12px "DejaVu Sans", Verdana, sans-serif; letter-spacing: .07px; white-space: nowrap; }
b { font-size: 8.5px; letter-spacing: .25px; color: #111; }

.titlebar { height: 17px; background: #fff; display: flex; align-items: center; padding-left: 2px; flex: none; }
.logo { width: 12px; height: 12px; }
.title { font: 8.7px/16px "Noto Sans", sans-serif; letter-spacing: -.01px; color: #858585; margin-left: 3.500px; flex: 1; }
.winbtns { width: 90px; height: 16px; margin-right: 10px; margin-top: -2px; }
.menubar { height: 15.500px; background: #fff; display: flex; gap: 10.600px; padding: 0 0 0 5px; font: 8.6px/16px "Noto Sans", sans-serif; letter-spacing: 0; color: #505050; flex: none; }

.toolbar { height: 24px; display: flex; align-items: center; padding: 0 9px 0 8px; border-top: 1px solid #bbb; flex: none; }
.group { display: flex; border: 1px solid #707070; border-radius: 2px; background: linear-gradient(#e6e6e6, #cdcdcd); overflow: hidden; }
.group span { display: flex; align-items: center; justify-content: center; border-left: 1px solid #8c8c8c; }
.group span:first-child { border-left: 0; }
.tools { width: 170.500px; height: 16px; }
.tools span { flex: 1; }
.tools svg { width: 13px; height: 13px; }
.tools .on { background: #5b5b5b; }
.pivots { width: 97px; height: 13px; margin-left: 15px; }
.pivots span { flex: 1; gap: 1px; font-size: 8.700px; letter-spacing: 0; padding-top: .5px; }
.pivots svg { width: 8px; height: 8px; }
.play { width: 73px; height: 16px; margin-left: 296.500px; }
.play span { flex: 1; }
.play svg { width: 13px; height: 11px; }
.drop { height: 13.500px; width: 60.500px; border: 1px solid #777; border-radius: 2px; background: linear-gradient(#ebebeb, #cecece); display: flex; align-items: center; padding: 0 5px 0 3.500px; font-size: 8.600px; letter-spacing: .1px; }
.drop .caret { margin-left: auto; }
.caret { width: 5px; height: 4px; }
.collab { width: 58px; margin-left: auto; margin-right: 8.500px; padding: 0 3px 0 5px; }
.tick { width: 9px; height: 9px; margin-right: 3px; }
.cloud { width: 24px; margin-right: 8px; padding: 0 5px; }
.cloud svg { width: 12px; height: 9px; }
.account { margin-right: 16px; }
.layers { margin-right: 8px; }

.workspace { flex: 1; display: flex; min-height: 0; }
.left { width: 1022px; display: flex; flex-direction: column; }
.upper { display: flex; height: 489px; }
.hierarchy { width: 231px; border-right: 3px solid #999; display: flex; flex-direction: column; }
.scene { width: 791px; border-right: 3px solid #a2a2a2; display: flex; flex-direction: column; }
.tabs { height: 13.500px; display: flex; align-items: center; flex: none; }
.tab { height: 13.500px; display: flex; align-items: center; padding-top: 1px; font-size: 8.600px; color: #383838; letter-spacing: .04px; }
.active { background: #d4d4d4; }
.ico { width: 9px; height: 9px; margin-right: 2.500px; }
.htab { width: 69.500px; padding-left: 5px; }
.stab { width: 55px; padding-left: 7px; }
.gtab { padding-left: 7.500px; margin-right: 18px; }
.ptab { width: 58px; padding-left: 5px; }
.ctab { padding-left: 7.500px; }
.itab { width: 70px; padding-left: 6px; }
.tabtools { margin-left: auto; display: flex; gap: 4px; align-items: center; padding-right: 3px; }
.lock { width: 7px; height: 8px; }
.mn { width: 11px; height: 6.500px; }
.strip { height: 13px; background: linear-gradient(#e0e0e0, #c8c8c8); border-top: 1px solid #a9a9a9; border-bottom: 1px solid #989898; display: flex; align-items: center; flex: none; font-size: 7.900px; }
.create { width: 41px; height: 11px; line-height: 11px; display: flex; align-items: center; gap: 3px; padding-left: 8.500px; border-right: 1px solid #999; letter-spacing: 0; }
.create .caret { width: 4px; height: 3px; }
.pc { margin-left: 4px; padding-left: 5px; border-left: 1px solid #aaa; }
.search { height: 10px; border: 1px solid #848484; border-radius: 5px; display: flex; align-items: center; padding-left: 3px; color: #777; background: #ddd; }
.search svg { width: 6px; height: 6px; }
.search i { border: 1.500px solid transparent; border-top: 2px solid #777; border-bottom: 0; margin-right: 1px; }
.hs { width: 175px; margin-left: 8px; }
.ss { width: 156px; margin: 0 4px 0 6px; }
.ps { width: 229px; }
.tree { flex: 1; background: linear-gradient(90deg, #adadad 12px, #c2c2c2 12px); }
.scenerow { height: 12.600px; background: #dcdcdc; display: flex; align-items: center; padding-left: 14px; border-bottom: 1px solid #b5b5b5; }
.scenerow .mn { margin-left: auto; margin-right: 2px; }
.arr { width: 7px; height: 7px; }
.u { width: 12px; height: 12px; margin: 0 1px 0 2px; }
.node { height: 12.200px; display: flex; align-items: center; }
.node .cube { width: 11px; height: 11px; margin: 0 2.500px 0 3px; }
.sel { background: #8f8f8f; color: #fff; }
.sel b { color: #fff; }
.sstrip { width: 788px; }
.shaded { width: 95px; height: 11px; line-height: 11px; padding-left: 8px; display: flex; align-items: center; border-right: 1px solid #999; letter-spacing: 0; }
.shaded .caret { margin-left: auto; margin-right: 2px; width: 4px; height: 3px; }
.lit { height: 11.500px; background: #efefef; display: flex; align-items: center; justify-content: center; }
.two { width: 18px; margin: 0 6px; letter-spacing: -.2px; }
.bulb { width: 19px; }
.bulb svg { width: 7px; height: 9px; }
.cell { height: 11px; display: flex; align-items: center; justify-content: center; gap: 3px; }
.cell svg:first-child:not(.caret) { width: 10px; height: 9px; }
.w21 { width: 20px; } .w26 { width: 26px; } .w8 { width: 8px; } .w17 { width: 17px; }
.cell .caret, .giz .caret { width: 4px; height: 3px; }
.tail { width: 3px; }
.bl { border-left: 1px solid #999; }
.m8 { margin-left: 7px; }
.eye { width: 21px; margin-left: 5px; gap: 1px; }
.eye svg { width: 10px; height: 8px; }
.grow { flex: 1; }
.giz { width: 43px; gap: 5px; letter-spacing: -.15px; font-size: 7.700px; }
.viewport { width: 788px; height: 462px; overflow: hidden; }
.big { font: 43px "Liberation Sans", Arial, sans-serif; fill: #080808; }
.click { font: 18px "Liberation Sans", Arial, sans-serif; fill: #fdf6f8; }

.project { width: 1019px; flex: 1; display: flex; flex-direction: column; margin-top: 3px; min-height: 0; }
.pbody { flex: 1; display: flex; background: #c2c2c2; min-height: 0; }
.ptree { width: 88px; border-right: 1px solid #999; overflow: hidden; }
.prow { height: 12.150px; display: flex; align-items: center; padding-left: 3px; }
.first { margin-top: -.8px; }
.prow .arr { margin-right: 2px; }
.star { width: 12px; height: 12px; margin-right: 2px; }
.fold { width: 12px; height: 10px; margin-right: 2px; }
.find { width: 13px; height: 13px; margin-right: 1px; }
.sub { padding-left: 22.500px; }
.pmain { flex: 1; }
.crumbs { height: 13px; background: #dedede; border-bottom: 1px solid #b0b0b0; display: flex; align-items: center; padding-left: 4.500px; gap: 5px; }
.crumbs svg { width: 6px; height: 9px; }
.assets { display: flex; gap: 12px; padding: 14px 0 0 13px; }
figure { margin: 0; width: 46px; display: flex; flex-direction: column; align-items: center; }
figure svg { width: 46px; height: 38px; }
figcaption { margin-top: 5.500px; margin-right: 2px; font-size: 7.700px; letter-spacing: .1px; }

.inspector { width: 258px; display: flex; flex-direction: column; }
.ibody { height: 548px; display: flex; background: #c2c2c2; border-top: 1px solid #aaa; overflow: hidden; flex: none; }
.icontent { width: 247px; overflow: hidden; }
.scroll { width: 11px; border-left: 1px solid #999; background: #d2d2d2; display: flex; flex-direction: column; align-items: center; padding: 4px 0 3px; }
.su { width: 8px; height: 6px; }
.track { flex: 1; width: 9px; margin: 2px 0; border-radius: 5px; background: #e4e4e4; border: 1px solid #999; }
.thumb { width: 9px; margin: 0 -1px; height: 316px; border-radius: 5px; border: 1px solid #44526d; background: linear-gradient(90deg, #63799e, #7e94b8, #5f769d); }
.objhead { height: 35.500px; background: #dcdcdc; display: flex; padding: 5px 0 0 6px; }
.bigcube { width: 18px; height: 18px; margin-top: 2px; }
.line { display: flex; align-items: center; height: 14px; padding-left: 9px; }
.tag { height: 16px; padding-left: 2px; }
.cb { width: 10px; height: 10px; border: 1px solid #77809a; background: #c9d3e6; border-radius: 1px; flex: none; }
.cb svg { width: 9px; height: 9px; }
.cb.empty { border-color: #888; background: #ececec; }
.chead .cb { margin: 0 2px 0 -.5px; }
.name { width: 143px; margin: 0 4.500px 0 4px; }
.static { margin-left: 1.500px; }
.sc { width: 8px; height: 5px; margin-left: 4px; }
.box { height: 11px; border: 1px solid #9a9a9a; border-top-color: #777; background: #d3d3d3; line-height: 10px; padding-left: 2px; overflow: hidden; }
.sel1, .popup { height: 11px; border: 1px solid #858585; border-radius: 2px; background: linear-gradient(#ececec, #d0d0d0); display: flex; align-items: center; padding: 0 2px 0 4px; font-size: 7.900px; line-height: 9px; }
.sel1 svg, .popup svg { margin-left: auto; width: 4px; height: 8px; }
.sel1 { width: 85px; margin: 0 4.500px 0 5.500px; }
.s2 { width: 76px; }
.comp { border-top: 1px solid #858585; }
.chead { height: 12.700px; display: flex; align-items: center; padding-left: 4px; }
.cic { width: 14px; height: 13px; margin-left: 0; }
.cic.s { width: 11px; height: 11px; margin: 0 3px 0 2px; }
.solo { margin-left: 13px; }
.bk { width: 11px; height: 10px; margin-left: auto; }
.pr { width: 9px; height: 9px; margin-left: 4px; }
.ge { width: 11px; height: 10px; margin: 0 1px 0 4px; }
.rt { height: 154px; }
.cr { height: 32px; }
.img { height: 100px; }
.rectgrid { display: flex; height: 49.700px; padding-left: 12px; }
.preset { width: 96px; display: grid; grid-template: 12px 38px / 0 40px; }
.preset svg { width: 37px; height: 37px; grid-area: 2 / 2; }
.ctr { grid-area: 1 / 2; padding-left: 5.500px; font-size: 7.800px; line-height: 13px; }
.mid { grid-area: 2 / 1; writing-mode: vertical-rl; transform: rotate(180deg) translateX(-1px); margin-left: -12px; text-align: center; font-size: 7.600px; width: 12px; }
.posgrid { display: grid; grid-template-columns: 43.500px 43.500px 43.500px; grid-template-rows: 12.700px 11.300px 12.700px 11.300px; column-gap: 2.300px; align-items: center; }
.posgrid .box { height: 11.500px; line-height: 10.500px; padding-left: 1px; }
.rbtn { display: flex; width: 40px; margin-left: 4px; height: 12.500px; border: 1px solid #888; border-radius: 2px; background: #dadada; }
.rbtn i { flex: 1; display: flex; align-items: center; justify-content: center; border-left: 1px solid #aaa; font-size: 8px; }
.rbtn i:first-child { border: 0; }
.rbtn svg { width: 8px; height: 8px; }
.anch { height: 12px; display: flex; align-items: center; padding-left: 2px; gap: 2.500px; margin-top: 1px; }
.vec { height: 12.200px; display: flex; align-items: center; padding-left: 11px; }
.vl { width: 98px; }
.min .vl, .max .vl { padding-left: 11px; }
.pivot { margin-top: 1.500px; }
.rotation { margin-top: 7.500px; }
.scale { margin-top: 1.500px; }
.ax { width: 9px; margin-left: -.2px; }
.vb { width: 34px; margin-right: 3px; height: 11.500px; line-height: 10.500px; }
.row { height: 13.700px; display: flex; align-items: center; padding-left: 11px; }
.cr .row { height: 12.500px; }
.lab { width: 91px; flex: none; }
.obj { width: 127.500px; display: flex; align-items: center; flex: none; }
.obj em { line-height: 9px; }
.obj svg { width: 9px; height: 9px; margin: 0 1px 0 -1px; }
.tg { width: 8px; height: 8px; margin-left: 5px; }
.col { width: 127.500px; height: 11px; border: 1px solid #777; display: flex; flex-direction: column; }
.col i { flex: 1; } .col u { height: 2px; }
.pk { width: 11px; height: 11px; margin-left: 3px; }
.popup { width: 141px; letter-spacing: 0; }
.popup.shift { width: 136px; margin-left: 3px; }
.cb.shift { margin-left: 3px; }
.vis { justify-content: center; height: 12px; }
.full { width: 141px; }
.slide { width: 99px; height: 3px; background: #999; border-radius: 2px; display: flex; align-items: center; }
.slide i { width: 7px; height: 7px; border: 1px solid #777; border-radius: 50%; background: #ddd; margin-left: -1px; }
.sv { width: 38px; margin-left: 4px; }
.phead { height: 13px; background: linear-gradient(#5d5d5d, #454545); border-top: 1px solid #333; display: flex; align-items: center; padding: 0 5px 0 6px; flex: none; }
.phead b { color: #f0f0f0; }
.pud { width: 4px; height: 8px; margin: 0 6px 0 4px; }
.phead i { flex: 1; height: 3px; border-top: 1px solid #aaa; border-bottom: 1px solid #aaa; }
.preview { flex: 1; background: #313131; padding: 2px 0 0 70px; overflow: hidden; }
.preview svg { width: 117px; height: 87px; overflow: hidden; }

.dialog { position: absolute; left: 280px; top: 127px; width: 178px; height: 375.500px; background: #c2c2c2; box-shadow: 0 0 1px #333; }
.dtitle { height: 23px; background: #fff; display: flex; align-items: center; justify-content: space-between; padding: 0 1.500px 0 6.500px; font: 8.700px/23px "Noto Sans", sans-serif; }
.dtitle i { width: 14px; height: 14px; background: #c45157; color: #fff; text-align: center; line-height: 12px; font-size: 8px; font-weight: bold; margin-top: 2px; }
.dbody { padding: 11px 8px 0; }
.dtop { display: flex; justify-content: space-between; height: 19px; padding-left: .5px; }
.dtop svg { width: 13px; height: 13px; margin-top: 1px; }
.sw { display: flex; width: 58px; border-radius: 2px; overflow: hidden; }
.sw i { flex: 1; background: #fff; } .sw .dk { background: #381616; }
.wheel { position: relative; width: 164px; height: 164px; margin: 7.500px 0 0 -1.300px; border-radius: 50%; background: conic-gradient(from 90deg, #f00, #f0f, #00f, #0ff, #0f0, #ff0, #f00); display: flex; align-items: center; justify-content: center; }
.hole { width: 129px; height: 129px; border-radius: 50%; background: #c2c2c2; display: flex; align-items: center; justify-content: center; }
.sv2 { width: 81px; height: 81px; background: linear-gradient(transparent, #000), linear-gradient(90deg, #fff, #f00); }
.hue { position: absolute; left: 146.500px; top: 73.500px; width: 17px; height: 17px; border: 2px solid #f5e6e6; border-radius: 50%; background: #ed1212; }
.pt { position: absolute; left: 83px; top: 100px; width: 10px; height: 10px; border: 1.300px solid #b9a3a3; border-radius: 50%; }
.cursor { position: absolute; left: 90px; top: 99.500px; width: 10px; height: 15px; }
.mode { display: flex; justify-content: flex-end; margin-top: 9px; height: 12px; }
.mode span { width: 55px; height: 12px; border: 1px solid #7080c8; border-radius: 3px; background: #e8e8ee; display: flex; align-items: center; justify-content: center; font-size: 7.800px; letter-spacing: .15px; box-shadow: 0 0 1px #5a6bc4; }
.mode svg { width: 4px; height: 8px; margin-left: -2px; }
.chan { height: 18.200px; display: flex; align-items: center; }
.mode + .chan { margin-top: 4.300px; }
.chan span:first-child { width: 11px; padding-left: .5px; font-size: 8px; }
.bar { position: relative; width: 113px; height: 12px; border: 1px solid #777; }
.bar i { position: absolute; top: 0; width: 2.500px; height: 10px; margin-left: -1px; background: #fff; }
.chan .box { width: 34.500px; height: 12.500px; line-height: 11.500px; margin-left: 4px; }
.hex { display: flex; align-items: center; justify-content: space-between; height: 18px; padding-left: .5px; letter-spacing: .1px; }
.hex .box { width: 55px; height: 12px; line-height: 11px; }
.swh { height: 18.500px; display: flex; align-items: center; gap: 2.500px; padding-left: 1.500px; letter-spacing: .1px; }
.swh .mn { margin-left: auto; margin-right: 1px; }
.add { height: 10px; display: flex; align-items: center; color: #7d7d7d; gap: 5px; letter-spacing: .1px; }
.add i { width: 11px; height: 11px; border: 1px solid #555; background: #381616; border-radius: 2px; box-shadow: inset 0 0 0 2px #ddd; }
</style>
